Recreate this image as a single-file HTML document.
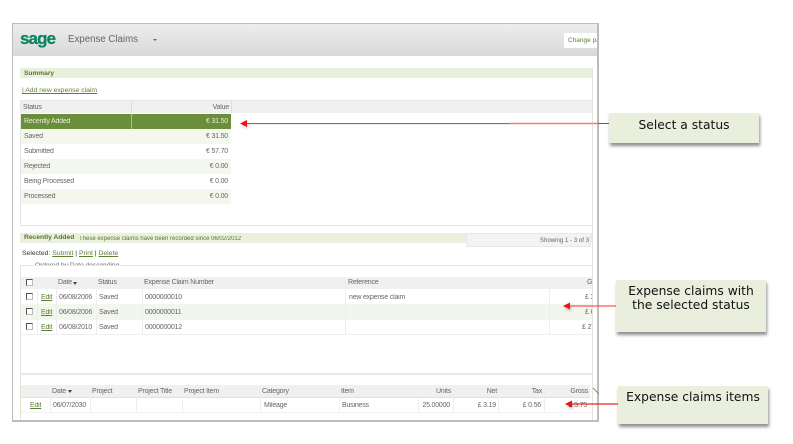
<!DOCTYPE html>
<html><head><meta charset="utf-8">
<style>
html,body{margin:0;padding:0;background:#fff}
#p{position:relative;width:793px;height:444px;overflow:hidden;background:#fff;font-family:"Liberation Sans",sans-serif;font-size:7px;letter-spacing:-.2px;color:#666}
#p div,#p span.a{position:absolute}
.t{white-space:nowrap;line-height:10px;filter:blur(.3px)}
.r{text-align:right}
.l{color:#5f7f35;text-decoration:underline}
.b{background:#f0f0f0}
.v{width:1px;background:#eeeeee}
.cb{width:5px;height:5px;border:1px solid #555;border-right-color:#bbb;border-bottom-color:#bbb;background:#fff}
.c{background:#eaeedd;box-shadow:1px 3px 3px rgba(70,70,70,.6);color:#111;font-family:"DejaVu Sans",sans-serif;font-size:12.3px;letter-spacing:0;line-height:14px;text-align:center}
</style></head><body><div id="p">
<div style="left:12px;top:23px;width:584px;height:396px;border:2px solid #bcbcbc;border-width:1px 2px 2px 1px;background:#fff"></div>
<div style="left:13px;top:24px;width:584px;height:32px;background:linear-gradient(#ededed,#d9d9d9)"></div>
<div class="t" style="left:20px;top:29px;font:bold 17px/20px 'Liberation Sans',sans-serif;letter-spacing:-.9px;color:#0a8660;-webkit-text-stroke:.3px #0a8660">sage</div>
<div class="t" style="left:68px;top:35px;font-size:9.7px;letter-spacing:0;color:#666">Expense Claims</div>
<div style="left:153px;top:39px;border:2px solid transparent;border-top:2px solid #666"></div>
<div style="left:564px;top:33px;width:33px;height:15px;background:#fff;border-radius:2px 0 0 2px"></div>
<div class="t" style="left:568px;top:36px;width:29px;overflow:hidden;color:#5f7f35;font-size:6.5px;letter-spacing:0">Change page</div>

<div style="left:20px;top:68px;width:573px;height:10px;background:#e9f0de"></div>
<div class="t" style="left:24px;top:69px;font-weight:bold;color:#5f7325;font-size:6.6px;letter-spacing:0">Summary</div>
<div class="t l" style="left:22px;top:86px;font-size:6.8px;letter-spacing:0">| Add new expense claim</div>

<div style="left:20px;top:100px;width:571px;height:124px;border:1px solid #e6e6e6;background:#fff"></div>
<div class="b" style="left:21px;top:101px;width:571px;height:12px"></div>
<div class="v" style="left:131px;top:101px;height:12px;background:#ddd"></div>
<div class="v" style="left:231px;top:101px;height:12px;background:#ddd"></div>
<div class="t" style="left:23px;top:103px">Status</div>
<div class="t r" style="left:130px;top:103px;width:99px">Value</div>
<div style="left:21px;top:114px;width:210px;height:15px;background:#6b8e3a"></div>
<div class="v" style="left:131px;top:114px;height:15px;background:#a9c08a"></div>
<div style="left:21px;top:129px;width:210px;height:15px;background:#f4f7ee"></div>
<div style="left:21px;top:159px;width:210px;height:15px;background:#f4f7ee"></div>
<div style="left:21px;top:189px;width:210px;height:15px;background:#f4f7ee"></div>
<div class="t" style="left:24px;top:117px;color:#e8eedd">Recently Added</div>
<div class="t r" style="left:130px;top:117px;width:98px;color:#e8eedd">€ 31.50</div>
<div class="t" style="left:24px;top:132px">Saved</div><div class="t r" style="left:130px;top:132px;width:98px">€ 31.50</div>
<div class="t" style="left:24px;top:147px">Submitted</div><div class="t r" style="left:130px;top:147px;width:98px">€ 57.70</div>
<div class="t" style="left:24px;top:162px">Rejected</div><div class="t r" style="left:130px;top:162px;width:98px">€ 0.00</div>
<div class="t" style="left:24px;top:177px">Being Processed</div><div class="t r" style="left:130px;top:177px;width:98px">€ 0.00</div>
<div class="t" style="left:24px;top:192px">Processed</div><div class="t r" style="left:130px;top:192px;width:98px">€ 0.00</div>

<div style="left:20px;top:233px;width:573px;height:10px;background:#e9f0de"></div>
<div class="t" style="left:24px;top:233px;font-weight:bold;color:#5f7325;font-size:6.7px;letter-spacing:0">Recently Added</div>
<div class="t" style="left:79px;top:234px;color:#5f7325;font-size:6px;letter-spacing:0">These expense claims have been recorded since 06/02/2012</div>
<div style="left:466px;top:233px;width:123px;height:12px;background:#f3f3f3;border:1px solid #e8e8e8"></div>
<div class="t r" style="left:466px;top:236px;width:123px;font-size:6.1px;letter-spacing:0">Showing 1 - 3 of 3</div>
<div class="t" style="left:22px;top:249px;color:#333;font-size:6.8px;letter-spacing:0">Selected: <span class="l">Submit</span> | <span class="l">Print</span> | <span class="l">Delete</span></div>
<div class="t" style="left:35px;top:261px;color:#666;font-size:6.6px;letter-spacing:0">Ordered by Date descending</div>
<div style="left:20px;top:265px;width:571px;height:108px;border:1px solid #e6e6e6;background:#fff"></div>
<div class="b" style="left:21px;top:277px;width:571px;height:12px"></div>
<div style="left:21px;top:304px;width:571px;height:16px;background:#f2f6ec"></div>
<div style="left:21px;top:334px;width:571px;height:1px;background:#efefef"></div>
<div class="v" style="left:37px;top:277px;height:58px"></div>
<div class="v" style="left:56px;top:277px;height:58px"></div>
<div class="v" style="left:96px;top:277px;height:58px"></div>
<div class="v" style="left:142px;top:277px;height:58px"></div>
<div class="v" style="left:345px;top:277px;height:58px"></div>
<div class="v" style="left:549px;top:277px;height:58px"></div>
<div class="cb" style="left:26px;top:279px"></div>
<div class="t" style="left:58px;top:278px">Date</div><div style="left:73px;top:282px;border:2.5px solid transparent;border-top:3px solid #444"></div>
<div class="t" style="left:98px;top:278px">Status</div>
<div class="t" style="left:144px;top:278px">Expense Claim Number</div>
<div class="t" style="left:348px;top:278px">Reference</div>
<div class="t" style="left:587px;top:278px;width:5px;overflow:hidden">Gross</div>

<div class="cb" style="left:26px;top:293px"></div><div class="t l" style="left:41px;top:293px">Edit</div><div class="t" style="left:59px;top:293px">06/08/2006</div><div class="t" style="left:99px;top:293px">Saved</div><div class="t" style="left:145px;top:293px">0000000010</div><div class="t" style="left:349px;top:293px">new expense claim</div><div class="t" style="left:585px;top:293px;width:7px;overflow:hidden">£ 3</div>
<div class="cb" style="left:26px;top:308px"></div><div class="t l" style="left:41px;top:308px">Edit</div><div class="t" style="left:59px;top:308px">06/08/2006</div><div class="t" style="left:99px;top:308px">Saved</div><div class="t" style="left:145px;top:308px">0000000011</div><div class="t" style="left:585px;top:308px;width:7px;overflow:hidden">£ 6</div>
<div class="cb" style="left:26px;top:323px"></div><div class="t l" style="left:41px;top:323px">Edit</div><div class="t" style="left:59px;top:323px">06/08/2010</div><div class="t" style="left:99px;top:323px">Saved</div><div class="t" style="left:145px;top:323px">0000000012</div><div class="t" style="left:582px;top:323px;width:10px;overflow:hidden">£ 27</div>

<div style="left:20px;top:373px;width:572px;height:2px;background:#e8e8e8"></div>
<div style="left:20px;top:375px;width:1px;height:45px;background:#dfe5d3"></div>
<div style="left:592px;top:68px;width:1px;height:352px;background:#e2e6da"></div>
<div class="b" style="left:21px;top:385px;width:569px;height:12px"></div>
<div style="left:21px;top:397px;width:569px;height:1px;background:#e0e0e0"></div>
<div style="left:21px;top:412px;width:569px;height:1px;background:#f2f2f2"></div>
<div class="v" style="left:50px;top:385px;height:27px"></div>
<div class="v" style="left:90px;top:385px;height:27px"></div>
<div class="v" style="left:136px;top:385px;height:27px"></div>
<div class="v" style="left:182px;top:385px;height:27px"></div>
<div class="v" style="left:260px;top:385px;height:27px"></div>
<div class="v" style="left:339px;top:385px;height:27px"></div>
<div class="v" style="left:418px;top:385px;height:27px"></div>
<div class="v" style="left:453px;top:385px;height:27px"></div>
<div class="v" style="left:498px;top:385px;height:27px"></div>
<div class="v" style="left:544px;top:385px;height:27px"></div>
<div class="t" style="left:52px;top:387px">Date</div><div style="left:68px;top:390px;border:2.5px solid transparent;border-top:3px solid #444"></div>
<div class="t" style="left:92px;top:387px">Project</div>
<div class="t" style="left:138px;top:387px">Project Title</div>
<div class="t" style="left:184px;top:387px">Project Item</div>
<div class="t" style="left:262px;top:387px">Category</div>
<div class="t" style="left:341px;top:387px">Item</div>
<div class="t r" style="left:418px;top:387px;width:33px">Units</div>
<div class="t r" style="left:453px;top:387px;width:44px">Net</div>
<div class="t r" style="left:498px;top:387px;width:44px">Tax</div>
<div class="t r" style="left:544px;top:387px;width:44px">Gross</div>
<div class="t l" style="left:30px;top:401px">Edit</div>
<div class="t" style="left:53px;top:401px">06/07/2030</div>
<div class="t" style="left:264px;top:401px">Mileage</div>
<div class="t" style="left:342px;top:401px">Business</div>
<div class="t r" style="left:418px;top:401px;width:32px">25.00000</div>
<div class="t r" style="left:453px;top:401px;width:43px">£ 3.19</div>
<div class="t r" style="left:498px;top:401px;width:43px">£ 0.56</div>
<div class="t r" style="left:544px;top:401px;width:43px">£ 3.75</div>

<svg style="position:absolute;left:0;top:0" width="793" height="444">
<path d="M593 388l6 6" stroke="#6a9a80" stroke-width="1" fill="none"/>
<g fill="#000" opacity=".28" style="filter:blur(1.5px)"><path d="M241 125l7-3v6z"/><path d="M564 308l7-3v6z"/><path d="M566 406l7-3v6z"/></g>
<path d="M247 124.5H510" stroke="#ccc" stroke-width="1" opacity=".4" fill="none"/>
<path d="M247 123.5H510" stroke="#f04040" stroke-width="1" fill="none"/>
<path d="M510 123.5H598" stroke="#ff7878" stroke-width="1.5" fill="none"/>
<path d="M598 123.5H619" stroke="#ee2020" stroke-width="1" fill="none"/>
<path d="M570 306H618" stroke="#f55" stroke-width="1.3" fill="none"/>
<path d="M572 404H620" stroke="#f02020" stroke-width="1.2" fill="none"/>
<path d="M240 123.5l7-3.5v7z" fill="#ee1111"/>
<path d="M563 306l7-3.5v7z" fill="#ee1111"/>
<path d="M565 404l7-3.5v7z" fill="#ee1111"/>
</svg>

<div class="c" style="left:609px;top:113px;width:150px;height:30px"><span class="a" style="left:0;top:5px;width:150px;color:#111">Select a status</span></div>
<div class="c" style="left:616px;top:280px;width:150px;height:52px"><span class="a" style="left:0;top:4px;width:150px;color:#111">Expense claims with<br>the selected status</span></div>
<div class="c" style="left:618px;top:386px;width:150px;height:38px"><span class="a" style="left:0;top:4px;width:150px;color:#111">Expense claims items</span></div>
</div></body></html>
